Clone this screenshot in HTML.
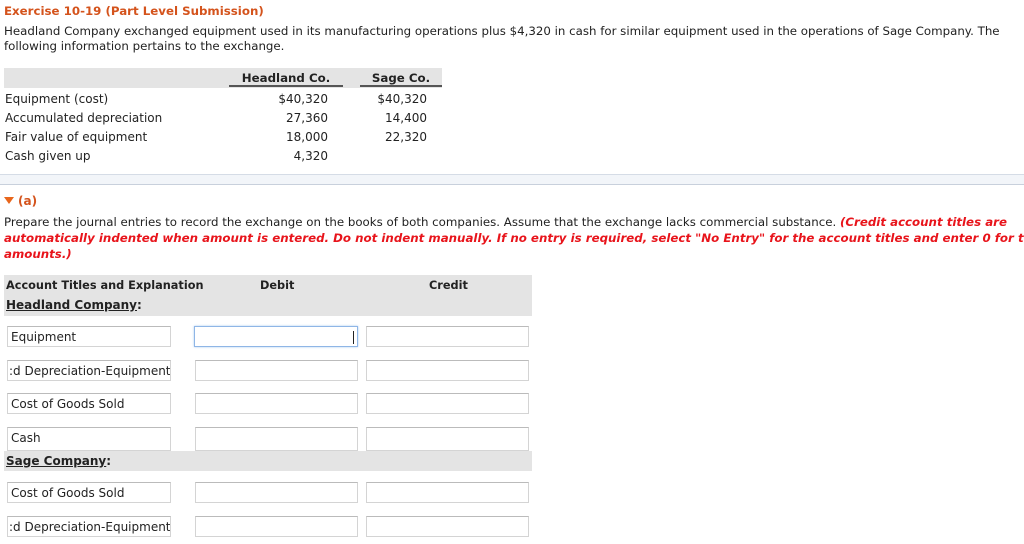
<!DOCTYPE html>
<html><head><style>
body{margin:0;width:1024px;height:544px;overflow:hidden;background:#fff;font-family:"DejaVu Sans",Verdana,sans-serif;font-size:12px;color:#222;position:relative}
.a{position:absolute;white-space:nowrap}
.b{font-weight:bold}
.r{text-align:right}
.inp{position:absolute;height:21px;border:1px solid #d4d4d4;border-top-color:#bbb;background:#fff;box-sizing:border-box;font-size:12px;line-height:20px;padding-left:3px;overflow:hidden;white-space:nowrap;color:#222}
</style></head><body>
<div class="a b" style="left:4px;top:4px;color:#d4531c;font-size:11.8px">Exercise 10-19 (Part Level Submission)</div>
<div class="a" style="left:4px;top:24px;line-height:15px;font-size:11.8px">Headland Company exchanged equipment used in its manufacturing operations plus $4,320 in cash for similar equipment used in the operations of Sage Company. The<br>following information pertains to the exchange.</div>

<div class="a" style="left:4px;top:68px;width:438px;height:20px;background:#e4e4e4"></div>
<div class="a b" style="left:229px;top:71px;width:114px;text-align:center;font-size:11.8px">Headland Co.</div>
<div class="a b" style="left:360px;top:71px;width:82px;text-align:center;font-size:11.8px">Sage Co.</div>
<div class="a" style="left:229px;top:85px;width:114px;height:2px;background:#555"></div>
<div class="a" style="left:360px;top:85px;width:82px;height:2px;background:#555"></div>
<div class="a" style="left:5px;top:90px;line-height:19px">Equipment (cost)<br>Accumulated depreciation<br>Fair value of equipment<br>Cash given up</div>
<div class="a r" style="left:250px;width:78px;top:90px;line-height:19px">$40,320<br>27,360<br>18,000<br>4,320</div>
<div class="a r" style="left:350px;width:77px;top:90px;line-height:19px">$40,320<br>14,400<br>22,320</div>

<div class="a" style="left:0;top:174px;width:1024px;height:9px;background:#f2f5f9;border-top:1px solid #d5dce6;border-bottom:1px solid #c8d0dc"></div>

<div class="a" style="left:4px;top:197px;width:0;height:0;border-left:5px solid transparent;border-right:5px solid transparent;border-top:7px solid #e8661c"></div>
<div class="a b" style="left:18px;top:194px;color:#d4531c">(a)</div>
<div class="a" style="left:4px;top:214px;line-height:16px;font-size:11.8px">Prepare the journal entries to record the exchange on the books of both companies. Assume that the exchange lacks commercial substance. <b><i style="color:#e8141b">(Credit account titles are</i></b><br><b><i style="color:#e8141b">automatically indented when amount is entered. Do not indent manually. If no entry is required, select "No Entry" for the account titles and enter 0 for the</i></b><br><b><i style="color:#e8141b">amounts.)</i></b></div>

<div class="a" style="left:4px;top:275px;width:528px;height:41px;background:#e4e4e4"></div>
<div class="a b" style="left:6px;top:279px;font-size:11.3px">Account Titles and Explanation</div>
<div class="a b" style="left:260px;top:279px;font-size:11.3px">Debit</div>
<div class="a b" style="left:429px;top:279px;font-size:11.3px">Credit</div>
<div class="a b" style="left:6px;top:298px"><span style="text-decoration:underline">Headland Company</span>:</div>

<div class="inp" style="left:7px;top:326px;width:164px">Equipment</div>
<div class="inp" style="left:194px;top:326px;width:164px;border:1px solid #8fb6e6;box-shadow:0 0 2px #a8c8f0"><span style="position:absolute;right:3px;top:4px;width:1px;height:13px;background:#222"></span></div>
<div class="inp" style="left:366px;top:326px;width:163px"></div>

<div class="inp" style="left:7px;top:360px;width:164px;padding-left:1px">:d Depreciation-Equipment</div>
<div class="inp" style="left:195px;top:360px;width:163px"></div>
<div class="inp" style="left:366px;top:360px;width:163px"></div>

<div class="inp" style="left:7px;top:393px;width:164px">Cost of Goods Sold</div>
<div class="inp" style="left:195px;top:393px;width:163px"></div>
<div class="inp" style="left:366px;top:393px;width:163px"></div>

<div class="inp" style="left:7px;top:427px;width:164px;height:24px">Cash</div>
<div class="inp" style="left:195px;top:427px;width:163px;height:24px"></div>
<div class="inp" style="left:366px;top:427px;width:163px;height:24px"></div>

<div class="a" style="left:4px;top:451px;width:528px;height:20px;background:#e4e4e4"></div>
<div class="a b" style="left:6px;top:454px"><span style="text-decoration:underline">Sage Company</span>:</div>

<div class="inp" style="left:7px;top:482px;width:164px">Cost of Goods Sold</div>
<div class="inp" style="left:195px;top:482px;width:163px"></div>
<div class="inp" style="left:366px;top:482px;width:163px"></div>

<div class="inp" style="left:7px;top:516px;width:164px;padding-left:1px">:d Depreciation-Equipment</div>
<div class="inp" style="left:195px;top:516px;width:163px"></div>
<div class="inp" style="left:366px;top:516px;width:163px"></div>
</body></html>
